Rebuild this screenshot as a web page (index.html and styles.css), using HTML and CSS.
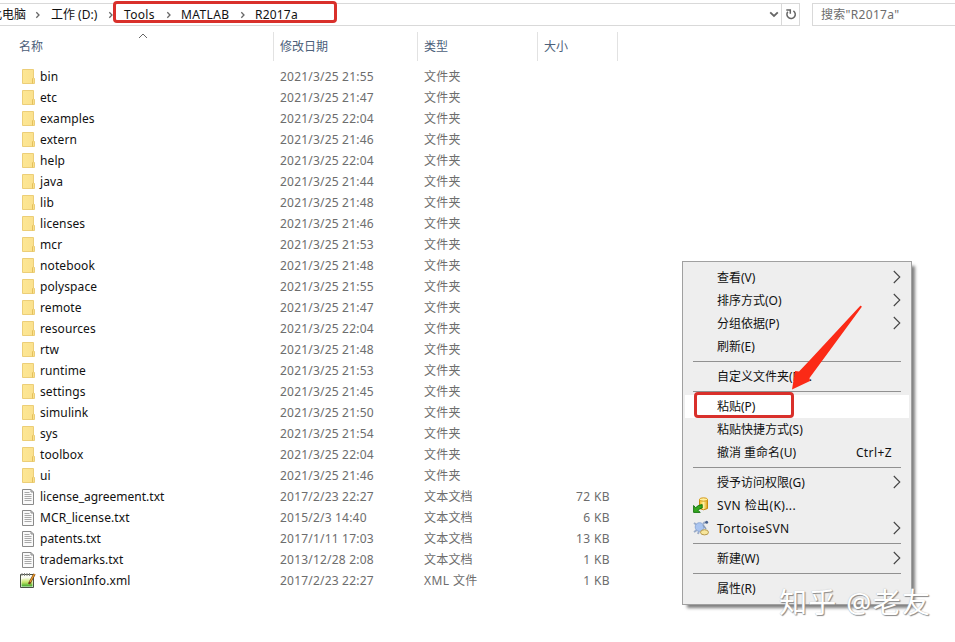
FILE: index.html
```html
<!DOCTYPE html>
<html lang="zh-CN">
<head>
<meta charset="utf-8">
<title>R2017a</title>
<link rel="stylesheet" href="styles.css">
</head>
<body>
<svg class="defs" width="0" height="0">
  <defs>
    <linearGradient id="fg" x1="0" x2="1"><stop offset="0" stop-color="#fde793"/><stop offset="1" stop-color="#fae08e"/></linearGradient>
    <linearGradient id="gg" x1="0" y1="0" x2="0" y2="1"><stop offset="0" stop-color="#f6fadc"/><stop offset=".5" stop-color="#c4e468"/><stop offset="1" stop-color="#3ca82a"/></linearGradient>
    <linearGradient id="yg" x1="0" x2="1"><stop offset="0" stop-color="#f4b820"/><stop offset=".5" stop-color="#fff0a0"/><stop offset="1" stop-color="#e0a010"/></linearGradient>
  </defs>
  <symbol id="folder" viewBox="0 0 16 18"><path d="M2.5 1.500h11v8l1 1v5h-12z" fill="url(#fg)" stroke="#ecce78"/><path d="M12.500 15.500v-4.500l1-1.500" fill="none" stroke="#e3c05c"/></symbol>
  <symbol id="text" viewBox="0 0 16 18"><path d="M2.500 1.500h8.500l2.500 2.500v12.500h-11z" fill="#fafafa" stroke="#8a8a8a"/><path d="M11 1.500v2.500h2.500" fill="none" stroke="#8a8a8a"/><path d="M4.500 4.500h5M4.500 6.500h7M4.500 8.500h7M4.500 10.500h7M4.500 12.500h7" stroke="#a9a9a9" fill="none"/></symbol>
  <symbol id="xml" viewBox="0 0 16 18"><path d="M.5 2.500h13v13h-13z" fill="#fafcf2" stroke="#4b5044"/><path d="M1.500 7q6-2 11 0v7.500h-11z" fill="url(#gg)"/><path d="M2 1v3M4.500 1v3M7 1v3M9.500 1v3" stroke="#888"/><path d="M14.500 2L9 12" stroke="#70401c" stroke-width="2.500"/><path d="M14.500 2L10 10" stroke="#f0a02c" stroke-width="1.300"/></symbol>
  <symbol id="arrow" viewBox="0 0 8 14"><path d="M.8 1l6 6-6 6" fill="none" stroke="#444" stroke-width="1.100"/></symbol>
  <symbol id="crumb" viewBox="0 0 6 8"><path d="M1.300 1.200L4 4 1.300 6.800" fill="none" stroke="#666" stroke-width="1.300"/></symbol>
</svg>
<div class="bar">
  <div class="address">
    <span class="c1">此电脑</span><svg class="cr s1"><use href="#crumb"/></svg>
    <span class="c2">工作 (D:)</span><svg class="cr s2"><use href="#crumb"/></svg>
    <span class="c3">Tools</span><svg class="cr s3"><use href="#crumb"/></svg>
    <span class="c4">MATLAB</span><svg class="cr s4"><use href="#crumb"/></svg>
    <span class="c5">R2017a</span>
    <svg class="drop" viewBox="0 0 10 7"><path d="M1.200 1.300L5 5l3.800-3.700" fill="none" stroke="#666" stroke-width="1.800"/></svg>
    <div class="refresh"><svg width="12" height="13" viewBox="0 0 12 13"><path d="M8.400 2.800A4.200 4.200 0 1 1 2.800 3.700M1.300 1.900H5.300v3.800" fill="none" stroke="#666" stroke-width="1.500"/></svg></div>
  </div>
  <div class="search">搜索"R2017a"</div>
</div>
<div class="head grid">
  <div class="h">名称<svg class="sort" viewBox="0 0 10 6"><path d="M1 5l4-4 4 4" fill="none" stroke="#666"/></svg></div><div class="h">修改日期</div><div class="h">类型</div><div class="h">大小</div>
</div>
<div class="list">
  <div class="row grid"><b><svg><use href="#folder"/></svg>bin</b><span>2021/3/25 21:55</span><span>文件夹</span><i></i></div>
  <div class="row grid"><b><svg><use href="#folder"/></svg>etc</b><span>2021/3/25 21:47</span><span>文件夹</span><i></i></div>
  <div class="row grid"><b><svg><use href="#folder"/></svg>examples</b><span>2021/3/25 22:04</span><span>文件夹</span><i></i></div>
  <div class="row grid"><b><svg><use href="#folder"/></svg>extern</b><span>2021/3/25 21:46</span><span>文件夹</span><i></i></div>
  <div class="row grid"><b><svg><use href="#folder"/></svg>help</b><span>2021/3/25 22:04</span><span>文件夹</span><i></i></div>
  <div class="row grid"><b><svg><use href="#folder"/></svg>java</b><span>2021/3/25 21:44</span><span>文件夹</span><i></i></div>
  <div class="row grid"><b><svg><use href="#folder"/></svg>lib</b><span>2021/3/25 21:48</span><span>文件夹</span><i></i></div>
  <div class="row grid"><b><svg><use href="#folder"/></svg>licenses</b><span>2021/3/25 21:46</span><span>文件夹</span><i></i></div>
  <div class="row grid"><b><svg><use href="#folder"/></svg>mcr</b><span>2021/3/25 21:53</span><span>文件夹</span><i></i></div>
  <div class="row grid"><b><svg><use href="#folder"/></svg>notebook</b><span>2021/3/25 21:48</span><span>文件夹</span><i></i></div>
  <div class="row grid"><b><svg><use href="#folder"/></svg>polyspace</b><span>2021/3/25 21:55</span><span>文件夹</span><i></i></div>
  <div class="row grid"><b><svg><use href="#folder"/></svg>remote</b><span>2021/3/25 21:47</span><span>文件夹</span><i></i></div>
  <div class="row grid"><b><svg><use href="#folder"/></svg>resources</b><span>2021/3/25 22:04</span><span>文件夹</span><i></i></div>
  <div class="row grid"><b><svg><use href="#folder"/></svg>rtw</b><span>2021/3/25 21:48</span><span>文件夹</span><i></i></div>
  <div class="row grid"><b><svg><use href="#folder"/></svg>runtime</b><span>2021/3/25 21:53</span><span>文件夹</span><i></i></div>
  <div class="row grid"><b><svg><use href="#folder"/></svg>settings</b><span>2021/3/25 21:45</span><span>文件夹</span><i></i></div>
  <div class="row grid"><b><svg><use href="#folder"/></svg>simulink</b><span>2021/3/25 21:50</span><span>文件夹</span><i></i></div>
  <div class="row grid"><b><svg><use href="#folder"/></svg>sys</b><span>2021/3/25 21:54</span><span>文件夹</span><i></i></div>
  <div class="row grid"><b><svg><use href="#folder"/></svg>toolbox</b><span>2021/3/25 22:04</span><span>文件夹</span><i></i></div>
  <div class="row grid"><b><svg><use href="#folder"/></svg>ui</b><span>2021/3/25 21:46</span><span>文件夹</span><i></i></div>
  <div class="row file grid"><b><svg><use href="#text"/></svg>license_agreement.txt</b><span>2017/2/23 22:27</span><span>文本文档</span><i>72 KB</i></div>
  <div class="row grid"><b><svg><use href="#text"/></svg>MCR_license.txt</b><span>2015/2/3 14:40</span><span>文本文档</span><i>6 KB</i></div>
  <div class="row file grid"><b><svg><use href="#text"/></svg>patents.txt</b><span>2017/1/11 17:03</span><span>文本文档</span><i>13 KB</i></div>
  <div class="row file grid"><b><svg><use href="#text"/></svg>trademarks.txt</b><span>2013/12/28 2:08</span><span>文本文档</span><i>1 KB</i></div>
  <div class="row grid"><b><svg><use href="#xml"/></svg>VersionInfo.xml</b><span>2017/2/23 22:27</span><span class="wide">XML 文件</span><i>1 KB</i></div>
</div>
<div class="menu">
  <div class="item">查看(V)<svg class="more"><use href="#arrow"/></svg></div>
  <div class="item">排序方式(O)<svg class="more"><use href="#arrow"/></svg></div>
  <div class="item">分组依据(P)<svg class="more"><use href="#arrow"/></svg></div>
  <div class="item">刷新(E)</div>
  <hr>
  <div class="item">自定义文件夹(F)...</div>
  <hr>
  <div class="item active">粘贴(P)</div>
  <div class="item">粘贴快捷方式(S)</div>
  <div class="item">撤消 重命名(U)<span class="key">Ctrl+Z</span></div>
  <hr>
  <div class="item">授予访问权限(G)<svg class="more"><use href="#arrow"/></svg></div>
  <div class="item wide"><svg class="ico" viewBox="0 0 16 16"><path d="M6.500 2.500v9q4 2.500 8 0v-9z" fill="url(#yg)" stroke="#c88a10"/><ellipse cx="10.500" cy="2.500" rx="4" ry="1.700" fill="#fff0a0" stroke="#d49a18"/><path d="M.6 8.500v6.900h6.600l-2-2q1-2 4-2.400V7.600q-4.600.4-6.500 3.200z" fill="#35a820" stroke="#12700c" stroke-width=".9"/></svg>SVN 检出(K)...</div>
  <div class="item wide"><svg class="ico" viewBox="0 0 16 16"><path d="M1 3l3 2M1 12l3-2M5 14l1-3M10 4l2-2" stroke="#9aabc8" stroke-width="2"/><circle cx="6.500" cy="7" r="4.300" fill="#a9c4f0" stroke="#8fabd8"/><circle cx="13.600" cy="2.200" r="1.500" fill="#465f8c"/><path d="M10 5l3 4" stroke="#8ca0bd" stroke-width="1.500"/><ellipse cx="11.500" cy="12.300" rx="4" ry="2.600" fill="#f7e69c" stroke="#b5984c"/></svg>TortoiseSVN<svg class="more"><use href="#arrow"/></svg></div>
  <hr>
  <div class="item">新建(W)<svg class="more"><use href="#arrow"/></svg></div>
  <hr>
  <div class="item">属性(R)</div>
</div>
<div class="mark path"></div>
<div class="mark paste"></div>
<svg class="pointer" viewBox="0 0 80 96"><path d="M76.300 3.800Q77.800 3.600 77.700 5L25.500 76l.5 3L8 87.500 11 69l4 .5L25 59z" fill="#fb2a16"/></svg>
<div class="watermark">知乎 @老友</div>
</body>
</html>
```
FILE: styles.css
```css
* { box-sizing: border-box; }
body { margin: 0; width: 955px; height: 642px; overflow: hidden; position: relative; background: #fff; color: #111; font: 12px/21px "Noto Sans", "Noto Sans CJK SC", sans-serif; white-space: nowrap; }
.defs { position: absolute; }
.bar { display: flex; gap: 12px; padding-top: 3px; height: 26px; }
.address { width: 800px; height: 23px; border: 1px solid #d9d9d9; border-left: 0; display: flex; align-items: center; flex: none; }
.address span { flex: none; }
.cr { width: 6px; height: 8px; flex: none; }
.c1 { margin-left: -10px; width: 36px; }
.s1 { margin: 0 10px 0 9px; }
.c2 { width: 50px; }
.s2 { margin: 0 10px 0 7px; }
.c3 { width: 34px; letter-spacing: .3px; }
.s3 { margin: 0 9px 0 8px; }
.c4 { width: 51px; letter-spacing: .4px; }
.s4 { margin: 0 9px 0 8px; }
.c5 { letter-spacing: .2px; }
.drop { width: 10px; height: 7px; margin-left: auto; margin-right: 2px; flex: none; }
.refresh { width: 18px; height: 21px; border-left: 1px solid #d9d9d9; display: flex; align-items: center; justify-content: center; flex: none; }
.search { flex: 1; height: 23px; border: 1px solid #d9d9d9; border-right: 0; padding-left: 8px; color: #6d6d6d; letter-spacing: .3px; }
.grid { display: grid; grid-template-columns: 274px 144px 120px 80px; }
.head { margin-top: 6px; height: 28px; color: #4c607a; line-height: 29px; }
.h { border-right: 1px solid #e2e2e2; padding-left: 6px; position: relative; }
.h:first-child { padding-left: 19px; }
.sort { position: absolute; left: 138px; top: 1px; width: 10px; height: 6px; }
.list { padding-top: 6px; }
.row { height: 21px; color: #6d6d6d; letter-spacing: .2px; }
.row b { font-weight: 400; color: #111; display: flex; align-items: center; gap: 4px; padding-left: 20px; letter-spacing: .1px; }
.file b { letter-spacing: 0; }
.row b svg { width: 16px; height: 18px; flex: none; }
.row span { padding-left: 6px; }
.row i { font-style: normal; text-align: right; padding-right: 8px; letter-spacing: .4px; }
.wide { letter-spacing: .4px; }
.menu { position: absolute; left: 682px; top: 261px; width: 230px; height: 344px; padding: 4px 2px; border: 1px solid #a0a0a0; background: #eee; box-shadow: 4px 4px 3px -1px rgba(0,0,0,.5); }
.item { height: 23px; line-height: 23px; padding: 0 8px 0 32px; display: flex; align-items: center; position: relative; }
.active { background: #fff; }
.more { width: 8px; height: 14px; margin-left: auto; margin-bottom: 2px; }
.key { margin-left: auto; margin-right: 9px; letter-spacing: .4px; }
.ico { width: 16px; height: 16px; position: absolute; left: 8px; top: 3px; }
hr { height: 1px; border: 0; background: #919191; margin: 3px 8px; }
.mark { position: absolute; border: 3px solid #d9302b; border-radius: 4px; }
.path { left: 113px; top: 1px; width: 224px; height: 22px; }
.paste { left: 694px; top: 392px; width: 100px; height: 26px; }
.pointer { position: absolute; left: 784px; top: 302px; width: 80px; height: 96px; }
.watermark { position: absolute; left: 779px; top: 584px; font-size: 28px; line-height: 36px; letter-spacing: 1.3px; color: #fff; text-shadow: 1px 1px 1px #888, 0 0 1px #aaa; }
```
